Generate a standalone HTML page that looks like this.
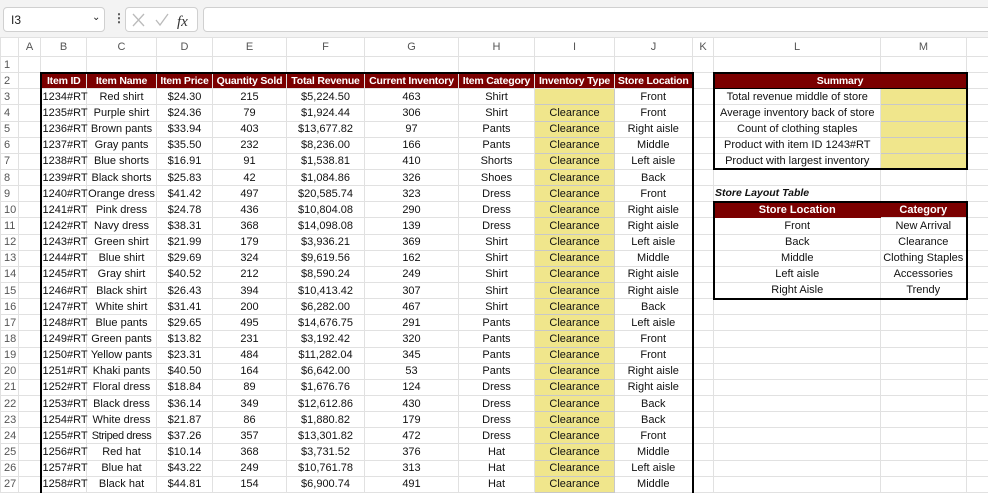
<!DOCTYPE html>
<html><head><style>
*{margin:0;padding:0;box-sizing:border-box}
body{width:988px;height:492px;overflow:hidden;background:#fff;font-family:"Liberation Sans",Arial,sans-serif;position:relative}
.top{position:absolute;left:0;top:0;width:988px;height:37px;background:#f3f3f3}
.nb{position:absolute;left:3px;top:7px;width:102px;height:25px;background:#fff;border:1px solid #d0d0d0;border-radius:4px;font-size:12px;padding:5px 0 0 7px;color:#222}
.fxb{position:absolute;left:125px;top:7px;width:73px;height:25px;background:#fff;border:1px solid #d0d0d0;border-radius:4px}
.fin{position:absolute;left:203px;top:7px;width:790px;height:25px;background:#fff;border:1px solid #d0d0d0;border-radius:4px}
table{position:absolute;left:0;top:37px;border-collapse:collapse;table-layout:fixed;width:988px;font-size:11px;color:#111}
td{border:1px solid #e1e1e1;height:16.15px;padding:0 1px;white-space:nowrap;overflow:visible;text-align:center;line-height:14px}
tr.h td{height:19px;color:#555;font-size:11px;background:#fff;border-color:#e1e1e1}
td.r{color:#555;text-align:left;padding-left:3px;font-size:11px}
td.l{text-align:left}
.hd td.t{background:#7b0000;color:#fff;font-weight:bold;font-size:10.5px;letter-spacing:-.2px}
td.y{background:#f0e68c;border-color:#c8c8c8}
</style></head><body>
<div class="top"></div>
<div class="nb">I3<span style="position:absolute;left:88px;top:4px;font-size:10px">&#8964;</span></div>
<div style="position:absolute;left:113px;top:11px;color:#444;font-size:12px;font-weight:bold">&#8942;</div>
<div class="fxb"><svg width="73" height="25"><path d="M7 6l11 12M18 6L7 18" stroke="#bbb" stroke-width="1.3" fill="none"/><path d="M30 12l4 5 8-11" stroke="#bbb" stroke-width="1.3" fill="none"/><text x="51" y="18" font-family="Liberation Serif" font-style="italic" font-size="15" fill="#333">fx</text></svg></div>
<div class="fin"></div>
<table>
<colgroup><col style="width:18px"><col style="width:22px"><col style="width:46px"><col style="width:70px"><col style="width:56px"><col style="width:74px"><col style="width:78px"><col style="width:94px"><col style="width:76px"><col style="width:80px"><col style="width:78px"><col style="width:21px"><col style="width:167px"><col style="width:86px"><col style="width:22px"></colgroup>
<tr class="h"><td></td><td>A</td><td>B</td><td>C</td><td>D</td><td>E</td><td>F</td><td>G</td><td>H</td><td>I</td><td>J</td><td>K</td><td>L</td><td>M</td><td></td></tr>
<tr><td class="r">1</td><td></td><td></td><td></td><td></td><td></td><td></td><td></td><td></td><td></td><td></td><td></td><td></td><td></td><td></td></tr>
<tr class="hd"><td class="r">2</td><td style="border-right:2px solid #000"></td><td class="t" style="border-top:2px solid #000">Item ID</td><td class="t" style="border-top:2px solid #000">Item Name</td><td class="t" style="border-top:2px solid #000">Item Price</td><td class="t" style="border-top:2px solid #000">Quantity Sold</td><td class="t" style="border-top:2px solid #000">Total Revenue</td><td class="t" style="border-top:2px solid #000">Current Inventory</td><td class="t" style="border-top:2px solid #000">Item Category</td><td class="t" style="border-top:2px solid #000">Inventory Type</td><td class="t" style="border-top:2px solid #000;border-right:2px solid #000">Store Location</td><td style="border-right:2px solid #000"></td><td class="t" colspan="2" style="border:2px solid #000;border-bottom:1px solid #000">Summary</td><td style="border-left:2px solid #000"></td></tr>
<tr><td class="r">3</td><td style="border-right:2px solid #000"></td><td class="l">1234#RT</td><td>Red shirt</td><td>$24.30</td><td>215</td><td>$5,224.50</td><td>463</td><td>Shirt</td><td class="y"></td><td style="border-right:2px solid #000">Front</td><td style="border-right:2px solid #000"></td><td>Total revenue middle of store</td><td class="y" style="border-right:2px solid #000"></td><td></td></tr>
<tr><td class="r">4</td><td style="border-right:2px solid #000"></td><td class="l">1235#RT</td><td>Purple shirt</td><td>$24.36</td><td>79</td><td>$1,924.44</td><td>306</td><td>Shirt</td><td class="y">Clearance</td><td style="border-right:2px solid #000">Front</td><td style="border-right:2px solid #000"></td><td>Average inventory back of store</td><td class="y" style="border-right:2px solid #000"></td><td></td></tr>
<tr><td class="r">5</td><td style="border-right:2px solid #000"></td><td class="l">1236#RT</td><td>Brown pants</td><td>$33.94</td><td>403</td><td>$13,677.82</td><td>97</td><td>Pants</td><td class="y">Clearance</td><td style="border-right:2px solid #000">Right aisle</td><td style="border-right:2px solid #000"></td><td>Count of clothing staples</td><td class="y" style="border-right:2px solid #000"></td><td></td></tr>
<tr><td class="r">6</td><td style="border-right:2px solid #000"></td><td class="l">1237#RT</td><td>Gray pants</td><td>$35.50</td><td>232</td><td>$8,236.00</td><td>166</td><td>Pants</td><td class="y">Clearance</td><td style="border-right:2px solid #000">Middle</td><td style="border-right:2px solid #000"></td><td>Product with item ID 1243#RT</td><td class="y" style="border-right:2px solid #000"></td><td></td></tr>
<tr><td class="r">7</td><td style="border-right:2px solid #000"></td><td class="l">1238#RT</td><td>Blue shorts</td><td>$16.91</td><td>91</td><td>$1,538.81</td><td>410</td><td>Shorts</td><td class="y">Clearance</td><td style="border-right:2px solid #000">Left aisle</td><td style="border-right:2px solid #000"></td><td style="border-bottom:2px solid #000">Product with largest inventory</td><td class="y" style="border-right:2px solid #000;border-bottom:2px solid #000"></td><td></td></tr>
<tr><td class="r">8</td><td style="border-right:2px solid #000"></td><td class="l">1239#RT</td><td>Black shorts</td><td>$25.83</td><td>42</td><td>$1,084.86</td><td>326</td><td>Shoes</td><td class="y">Clearance</td><td style="border-right:2px solid #000">Back</td><td></td><td></td><td></td><td></td></tr>
<tr><td class="r">9</td><td style="border-right:2px solid #000"></td><td class="l">1240#RT</td><td>Orange dress</td><td>$41.42</td><td>497</td><td>$20,585.74</td><td>323</td><td>Dress</td><td class="y">Clearance</td><td style="border-right:2px solid #000">Front</td><td></td><td class="l" style="font-weight:bold;font-style:italic;font-size:10.5px">Store Layout Table</td><td></td><td></td></tr>
<tr><td class="r">10</td><td style="border-right:2px solid #000"></td><td class="l">1241#RT</td><td>Pink dress</td><td>$24.78</td><td>436</td><td>$10,804.08</td><td>290</td><td>Dress</td><td class="y">Clearance</td><td style="border-right:2px solid #000">Right aisle</td><td style="border-right:2px solid #000"></td><td style="background:#7b0000;color:#fff;font-weight:bold;border-top:2px solid #000;border-color:#7b0000 #7b0000 #7b0000 #000;border-top-color:#000">Store Location</td><td style="background:#7b0000;color:#fff;font-weight:bold;border-top:2px solid #000;border-right:2px solid #000">Category</td><td></td></tr>
<tr><td class="r">11</td><td style="border-right:2px solid #000"></td><td class="l">1242#RT</td><td>Navy dress</td><td>$38.31</td><td>368</td><td>$14,098.08</td><td>139</td><td>Dress</td><td class="y">Clearance</td><td style="border-right:2px solid #000">Right aisle</td><td style="border-right:2px solid #000"></td><td>Front</td><td style="border-right:2px solid #000">New Arrival</td><td></td></tr>
<tr><td class="r">12</td><td style="border-right:2px solid #000"></td><td class="l">1243#RT</td><td>Green shirt</td><td>$21.99</td><td>179</td><td>$3,936.21</td><td>369</td><td>Shirt</td><td class="y">Clearance</td><td style="border-right:2px solid #000">Left aisle</td><td style="border-right:2px solid #000"></td><td>Back</td><td style="border-right:2px solid #000">Clearance</td><td></td></tr>
<tr><td class="r">13</td><td style="border-right:2px solid #000"></td><td class="l">1244#RT</td><td>Blue shirt</td><td>$29.69</td><td>324</td><td>$9,619.56</td><td>162</td><td>Shirt</td><td class="y">Clearance</td><td style="border-right:2px solid #000">Middle</td><td style="border-right:2px solid #000"></td><td>Middle</td><td style="border-right:2px solid #000;overflow:hidden;text-overflow:clip;direction:rtl;text-align:center">Clothing Staples</td><td></td></tr>
<tr><td class="r">14</td><td style="border-right:2px solid #000"></td><td class="l">1245#RT</td><td>Gray shirt</td><td>$40.52</td><td>212</td><td>$8,590.24</td><td>249</td><td>Shirt</td><td class="y">Clearance</td><td style="border-right:2px solid #000">Right aisle</td><td style="border-right:2px solid #000"></td><td>Left aisle</td><td style="border-right:2px solid #000">Accessories</td><td></td></tr>
<tr><td class="r">15</td><td style="border-right:2px solid #000"></td><td class="l">1246#RT</td><td>Black shirt</td><td>$26.43</td><td>394</td><td>$10,413.42</td><td>307</td><td>Shirt</td><td class="y">Clearance</td><td style="border-right:2px solid #000">Right aisle</td><td style="border-right:2px solid #000"></td><td style="border-bottom:2px solid #000">Right Aisle</td><td style="border-right:2px solid #000;border-bottom:2px solid #000">Trendy</td><td></td></tr>
<tr><td class="r">16</td><td style="border-right:2px solid #000"></td><td class="l">1247#RT</td><td>White shirt</td><td>$31.41</td><td>200</td><td>$6,282.00</td><td>467</td><td>Shirt</td><td class="y">Clearance</td><td style="border-right:2px solid #000">Back</td><td></td><td></td><td></td><td></td></tr>
<tr><td class="r">17</td><td style="border-right:2px solid #000"></td><td class="l">1248#RT</td><td>Blue pants</td><td>$29.65</td><td>495</td><td>$14,676.75</td><td>291</td><td>Pants</td><td class="y">Clearance</td><td style="border-right:2px solid #000">Left aisle</td><td></td><td></td><td></td><td></td></tr>
<tr><td class="r">18</td><td style="border-right:2px solid #000"></td><td class="l">1249#RT</td><td>Green pants</td><td>$13.82</td><td>231</td><td>$3,192.42</td><td>320</td><td>Pants</td><td class="y">Clearance</td><td style="border-right:2px solid #000">Front</td><td></td><td></td><td></td><td></td></tr>
<tr><td class="r">19</td><td style="border-right:2px solid #000"></td><td class="l">1250#RT</td><td>Yellow pants</td><td>$23.31</td><td>484</td><td>$11,282.04</td><td>345</td><td>Pants</td><td class="y">Clearance</td><td style="border-right:2px solid #000">Front</td><td></td><td></td><td></td><td></td></tr>
<tr><td class="r">20</td><td style="border-right:2px solid #000"></td><td class="l">1251#RT</td><td>Khaki pants</td><td>$40.50</td><td>164</td><td>$6,642.00</td><td>53</td><td>Pants</td><td class="y">Clearance</td><td style="border-right:2px solid #000">Right aisle</td><td></td><td></td><td></td><td></td></tr>
<tr><td class="r">21</td><td style="border-right:2px solid #000"></td><td class="l">1252#RT</td><td>Floral dress</td><td>$18.84</td><td>89</td><td>$1,676.76</td><td>124</td><td>Dress</td><td class="y">Clearance</td><td style="border-right:2px solid #000">Right aisle</td><td></td><td></td><td></td><td></td></tr>
<tr><td class="r">22</td><td style="border-right:2px solid #000"></td><td class="l">1253#RT</td><td>Black dress</td><td>$36.14</td><td>349</td><td>$12,612.86</td><td>430</td><td>Dress</td><td class="y">Clearance</td><td style="border-right:2px solid #000">Back</td><td></td><td></td><td></td><td></td></tr>
<tr><td class="r">23</td><td style="border-right:2px solid #000"></td><td class="l">1254#RT</td><td>White dress</td><td>$21.87</td><td>86</td><td>$1,880.82</td><td>179</td><td>Dress</td><td class="y">Clearance</td><td style="border-right:2px solid #000">Back</td><td></td><td></td><td></td><td></td></tr>
<tr><td class="r">24</td><td style="border-right:2px solid #000"></td><td class="l">1255#RT</td><td style="letter-spacing:-.4px">Striped dress</td><td>$37.26</td><td>357</td><td>$13,301.82</td><td>472</td><td>Dress</td><td class="y">Clearance</td><td style="border-right:2px solid #000">Front</td><td></td><td></td><td></td><td></td></tr>
<tr><td class="r">25</td><td style="border-right:2px solid #000"></td><td class="l">1256#RT</td><td>Red hat</td><td>$10.14</td><td>368</td><td>$3,731.52</td><td>376</td><td>Hat</td><td class="y">Clearance</td><td style="border-right:2px solid #000">Middle</td><td></td><td></td><td></td><td></td></tr>
<tr><td class="r">26</td><td style="border-right:2px solid #000"></td><td class="l">1257#RT</td><td>Blue hat</td><td>$43.22</td><td>249</td><td>$10,761.78</td><td>313</td><td>Hat</td><td class="y">Clearance</td><td style="border-right:2px solid #000">Left aisle</td><td></td><td></td><td></td><td></td></tr>
<tr><td class="r">27</td><td style="border-right:2px solid #000"></td><td class="l">1258#RT</td><td>Black hat</td><td>$44.81</td><td>154</td><td>$6,900.74</td><td>491</td><td>Hat</td><td class="y">Clearance</td><td style="border-right:2px solid #000">Middle</td><td></td><td></td><td></td><td></td></tr>
</table>
</body></html>
